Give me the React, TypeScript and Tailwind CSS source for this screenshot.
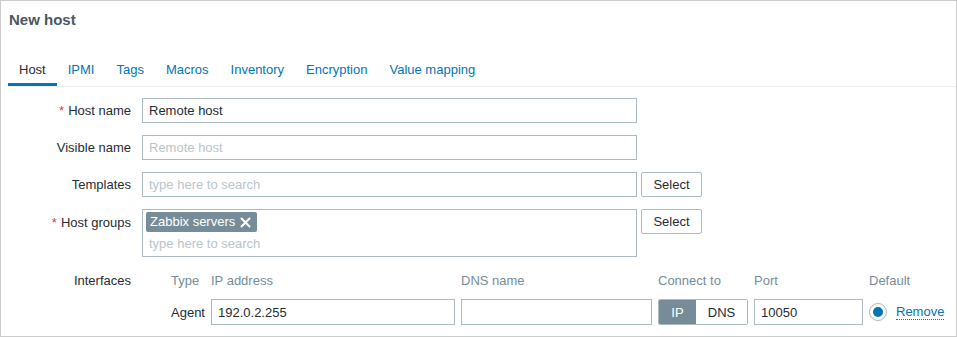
import React from 'react'

const tabs = ['Host', 'IPMI', 'Tags', 'Macros', 'Inventory', 'Encryption', 'Value mapping']

const Label = ({ text, required }: { text: string; required?: boolean }) => (
  <div className='text-right text-[#1f2c33] leading-[15px]'>
    {required && <span className='text-[#e33734] mr-[4px]'>*</span>}
    {text}
  </div>
)

const TextInput = ({ value, placeholder, w }: { value?: string; placeholder?: string; w: string }) => (
  <div className={`${w} h-[25px] border border-[#acbbc2] bg-white flex items-center pl-[6px] leading-[15px]`}>
    {value ? <span className='text-[#1f2c33]'>{value}</span> : <span className='text-[#b9c5cb]'>{placeholder}</span>}
  </div>
)

const SelectBtn = () => (
  <button className='w-[61px] h-[25px] border border-[#acbbc2] rounded-[2px] bg-white text-[#1f2c33] leading-[15px]'>
    Select
  </button>
)

const Hosts = () => {
  return (
    <div className='w-[957px] h-[337px] border border-[#cccccc] bg-white overflow-hidden text-[13px] font-["Liberation_Sans",Arial,sans-serif]'>
      <div className='pl-[7px]'>
        <h1 className='pt-[10px] pl-[1px] text-[15px] leading-[17px] font-bold text-[#4a5860]'>New host</h1>

        <div className='mt-[28px] flex border-b border-[#ebeef0]'>
          {tabs.map((t, i) => (
            <div
              key={t}
              className={
                i === 0
                  ? 'px-[11px] pt-[6px] pb-[6px] leading-[15px] border-b-[3px] border-[#0275b8] text-[#1f2c33]'
                  : 'px-[11px] pt-[6px] pb-[6px] leading-[15px] border-b-[3px] border-transparent text-[#0275b8]'
              }
            >
              {t}
            </div>
          ))}
        </div>

        <div className='mt-[11px] grid grid-cols-[123px_1fr] gap-x-[11px] gap-y-[12px] items-center'>
          <Label text='Host name' required />
          <TextInput w='w-[495px]' value='Remote host' />

          <Label text='Visible name' />
          <TextInput w='w-[495px]' placeholder='Remote host' />

          <Label text='Templates' />
          <div className='flex gap-[4px]'>
            <TextInput w='w-[495px]' placeholder='type here to search' />
            <SelectBtn />
          </div>

          <div className='self-start pt-[6px]'>
            <Label text='Host groups' required />
          </div>
          <div className='flex gap-[4px] items-start'>
            <div className='w-[495px] h-[48px] border border-[#acbbc2] bg-white pl-[3px] pt-[2px] flex flex-col'>
              <div className='self-start h-[20px] bg-[#768d99] rounded-[2px] text-white leading-[20px] pl-[4px] pr-[6px] flex items-center gap-[5px]'>
                <span>Zabbix servers</span>
                <svg width='11' height='11' viewBox='0 0 11 11'>
                  <path d='M1.5 1.5L9.5 9.5M9.5 1.5L1.5 9.5' stroke='white' strokeWidth='2' strokeLinecap='round' />
                </svg>
              </div>
              <div className='pl-[3px] pt-[4px] leading-[15px] text-[#b9c5cb]'>type here to search</div>
            </div>
            <SelectBtn />
          </div>
        </div>

        <div className='mt-[16px] grid grid-cols-[123px_1fr] gap-x-[11px]'>
          <div className='text-right text-[#1f2c33] leading-[15px]'>Interfaces</div>
          <div className='grid grid-cols-[23px_34px_244px_191px_90px_109px_auto] gap-x-[6px] gap-y-[11px] items-center leading-[15px]'>
            <div />
            <div className='text-[#768d99]'>Type</div>
            <div className='text-[#768d99]'>IP address</div>
            <div className='text-[#768d99]'>DNS name</div>
            <div className='text-[#768d99]'>Connect to</div>
            <div className='text-[#768d99]'>Port</div>
            <div className='text-[#768d99]'>Default</div>

            <div />
            <div className='text-[#1f2c33]'>Agent</div>
            <div className='h-[26px] border border-[#acbbc2] pl-[6px] flex items-center text-[#1f2c33]'>192.0.2.255</div>
            <div className='h-[26px] border border-[#acbbc2]' />
            <div className='h-[26px] flex border border-[#acbbc2] rounded-[2px] overflow-hidden'>
              <div className='w-[37px] bg-[#768d99] text-white flex items-center justify-center'>IP</div>
              <div className='flex-1 bg-white text-[#1f2c33] flex items-center justify-center'>DNS</div>
            </div>
            <div className='h-[26px] border border-[#acbbc2] pl-[6px] flex items-center text-[#1f2c33]'>10050</div>
            <div className='flex items-center gap-[9px]'>
              <div className='w-[18px] h-[18px] rounded-full border border-[#acbbc2] flex items-center justify-center'>
                <div className='w-[10px] h-[10px] rounded-full bg-[#0275b8]' />
              </div>
              <span className='text-[#0275b8] border-b border-dotted border-[#0275b8] leading-[14px]'>Remove</span>
            </div>
          </div>
        </div>
      </div>
    </div>
  )
}

export default function App() {
  return <Hosts />
}
